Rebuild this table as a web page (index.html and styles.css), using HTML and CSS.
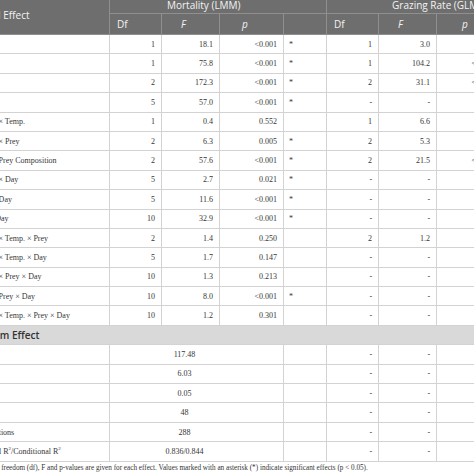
FILE: index.html
```html
<!DOCTYPE html>
<html>
<head>
<meta charset="utf-8">
<link rel="stylesheet" href="styles.css">
</head>
<body>
<div class="wrap">
<table class="tbl">
<colgroup>
<col class="c-lab"><col class="c-df"><col class="c-f"><col class="c-p"><col class="c-s"><col class="c-df"><col class="c-f"><col class="c-p">
</colgroup>
<thead>
<tr class="hr1">
<th rowspan="2" class="h-lab">Fixed Effect</th>
<th colspan="4" class="h-grp h-mort">Mortality (LMM)</th>
<th colspan="3" class="h-grp h-graz">Grazing Rate (GLMM)</th>
</tr>
<tr class="hr2">
<th class="h-df">Df</th><th class="h-f"><i>F</i></th><th class="h-p"><i>p</i></th><th></th>
<th class="h-df">Df</th><th class="h-f"><i>F</i></th><th class="h-p2"><i>p</i></th>
</tr>
</thead>
<tbody>
<tr><td class="lab">Species</td><td>1</td><td>18.1</td><td>&lt;0.001</td><td class="star">*</td><td>1</td><td>3.0</td><td>0.085</td></tr>
<tr><td class="lab">Temp.</td><td>1</td><td>75.8</td><td>&lt;0.001</td><td class="star">*</td><td>1</td><td>104.2</td><td>&lt;0.001</td></tr>
<tr><td class="lab">Prey</td><td>2</td><td>172.3</td><td>&lt;0.001</td><td class="star">*</td><td>2</td><td>31.1</td><td>&lt;0.001</td></tr>
<tr><td class="lab">Day</td><td>5</td><td>57.0</td><td>&lt;0.001</td><td class="star">*</td><td>-</td><td>-</td><td>-</td></tr>
<tr><td class="lab">Species × Temp.</td><td>1</td><td>0.4</td><td>0.552</td><td class="star"></td><td>1</td><td>6.6</td><td>0.011</td></tr>
<tr><td class="lab">Species × Prey</td><td>2</td><td>6.3</td><td>0.005</td><td class="star">*</td><td>2</td><td>5.3</td><td>0.005</td></tr>
<tr><td class="lab">Temp × Prey Composition</td><td>2</td><td>57.6</td><td>&lt;0.001</td><td class="star">*</td><td>2</td><td>21.5</td><td>&lt;0.001</td></tr>
<tr><td class="lab">Species × Day</td><td>5</td><td>2.7</td><td>0.021</td><td class="star">*</td><td>-</td><td>-</td><td>-</td></tr>
<tr><td class="lab">Temp × Day</td><td>5</td><td>11.6</td><td>&lt;0.001</td><td class="star">*</td><td>-</td><td>-</td><td>-</td></tr>
<tr><td class="lab">Prey × Day</td><td>10</td><td>32.9</td><td>&lt;0.001</td><td class="star">*</td><td>-</td><td>-</td><td>-</td></tr>
<tr><td class="lab">Species × Temp. × Prey</td><td>2</td><td>1.4</td><td>0.250</td><td class="star"></td><td>2</td><td>1.2</td><td>0.305</td></tr>
<tr><td class="lab">Species × Temp. × Day</td><td>5</td><td>1.7</td><td>0.147</td><td class="star"></td><td>-</td><td>-</td><td>-</td></tr>
<tr><td class="lab">Species × Prey × Day</td><td>10</td><td>1.3</td><td>0.213</td><td class="star"></td><td>-</td><td>-</td><td>-</td></tr>
<tr><td class="lab">Temp × Prey × Day</td><td>10</td><td>8.0</td><td>&lt;0.001</td><td class="star">*</td><td>-</td><td>-</td><td>-</td></tr>
<tr><td class="lab">Species × Temp. × Prey × Day</td><td>10</td><td>1.2</td><td>0.301</td><td class="star"></td><td>-</td><td>-</td><td>-</td></tr>
<tr class="sec"><td colspan="8">Random Effect</td></tr>
<tr><td class="lab">σ²</td><td colspan="3" class="rv">117.48</td><td></td><td>-</td><td>-</td><td></td></tr>
<tr><td class="lab">τ00</td><td colspan="3" class="rv">6.03</td><td></td><td>-</td><td>-</td><td></td></tr>
<tr><td class="lab">ICC</td><td colspan="3" class="rv">0.05</td><td></td><td>-</td><td>-</td><td></td></tr>
<tr><td class="lab">N</td><td colspan="3" class="rv">48</td><td></td><td>-</td><td>-</td><td></td></tr>
<tr><td class="lab">Observations</td><td colspan="3" class="rv">288</td><td></td><td>-</td><td>-</td><td></td></tr>
<tr><td class="lab">Marginal R<sup>2</sup>/Conditional R<sup>2</sup></td><td colspan="3" class="rv">0.836/0.844</td><td></td><td>-</td><td>-</td><td></td></tr>
</tbody>
</table>
<p class="note">Degrees of freedom (df), F and p-values are given for each effect. Values marked with an asterisk (*) indicate significant effects (p &lt; 0.05).</p>
</div>
</body>
</html>
```
FILE: styles.css
```css
html, body {
  margin: 0;
  padding: 0;
  background: #ffffff;
}
.wrap {
  width: 474px;
  height: 474px;
  overflow: hidden;
}
.tbl {
  margin-left: -33px;
  margin-top: -6px;
  border-collapse: collapse;
  table-layout: fixed;
  width: 533px;
  font-family: "Liberation Serif", "Times New Roman", serif;
  font-size: 8px;
  color: #363636;
}
.c-lab { width: 142px; }
.c-df { width: 52px; }
.c-f { width: 58px; }
.c-p { width: 64px; }
.c-s { width: 43px; }

.tbl th {
  background: #6e6e6e;
  color: #f3f3f3;
  font-family: "Open Sans", "Noto Sans", sans-serif;
  font-weight: 400;
  font-size: 10px;
  line-height: 12px;
  border: 1px solid #8f8f8f;
  text-align: left;
  padding: 0;
  white-space: nowrap;
  overflow: hidden;
}
.hr1 th { height: 16px; }
.hr2 th { height: 20px; }
.h-lab { padding-left: 8px !important; }
.h-mort { padding-left: 57px !important; vertical-align: bottom; padding-bottom: 2px !important; }
.h-graz { padding-left: 65px !important; vertical-align: bottom; padding-bottom: 2px !important; }
.h-df { padding-left: 7px !important; }
.h-f { padding-left: 19px !important; }
.h-p { padding-left: 22px !important; }
.h-p2 { padding-left: 25px !important; }

.tbl td {
  border: 1px solid #d3d3d3;
  height: 18.4px;
  padding: 0 6px;
  text-align: right;
  white-space: nowrap;
  overflow: hidden;
}
.tbl td.lab {
  text-align: left;
  padding-left: 4px;
}
.tbl td.star {
  text-align: left;
  padding-left: 5px;
}
.tbl td.rv {
  text-align: center;
  padding-right: 30px;
}
.tbl sup {
  font-size: 5px;
  line-height: 0;
}
.sec td {
  background: #d9d9d9;
  font-family: "Open Sans", "Noto Sans", sans-serif;
  font-weight: 600;
  font-size: 10px;
  color: #333333;
  text-align: left !important;
  padding-left: 1px !important;
  text-indent: 0;
}
.note {
  margin: 0 0 0 -32px;
  font-family: "Liberation Serif", "Times New Roman", serif;
  font-size: 7.2px;
  line-height: 12px;
  color: #333333;
  white-space: nowrap;
}
```
